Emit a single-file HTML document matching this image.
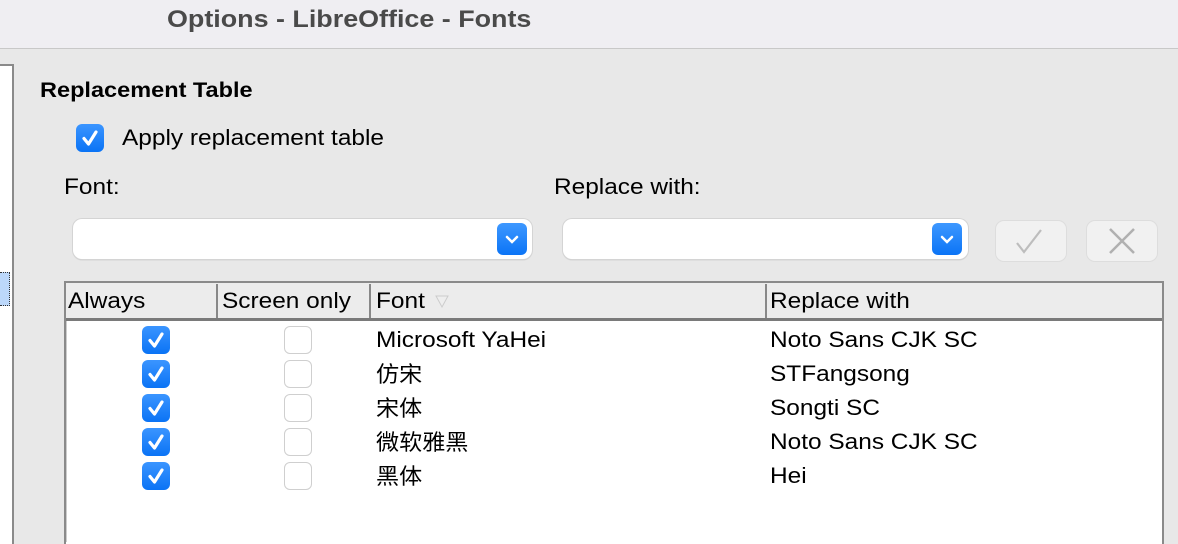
<!DOCTYPE html>
<html><head><style>
body{margin:0;width:1178px;height:542px;overflow:hidden;background:#e8e8e8;font-family:"Liberation Sans","Noto Sans CJK SC",sans-serif;position:relative;color:#000}
.a{position:absolute}
.s{transform:scaleX(1.12);transform-origin:0 0}
.title{left:0;top:0;width:1178px;height:48px;background:#efeef2;border-bottom:1px solid #c8c8c8}
.cb{width:28px;height:28px;border-radius:6px;background:linear-gradient(#3b95ff,#0a73f5);}
.cb svg{position:absolute;left:0;top:0}
.ucb{width:26px;height:26px;border-radius:6px;background:#fff;border:1px solid #cfcfcf}
.dd{background:#fff;border-radius:9px;box-shadow:0 0 0 1px #d4d4d4,0 1px 1px #aaa;height:40px;top:219px}
.btn{width:30px;height:32px;border-radius:6px;background:linear-gradient(#3e98ff,#0b74f6);top:223px}
.tb{width:70px;height:40px;border-radius:8px;background:#f1f1f1;box-shadow:0 0 0 1px #ddd;top:221px}
.t{font-size:22px;white-space:nowrap;transform:scaleX(1.11);transform-origin:0 0}
.c{font-size:22px;white-space:nowrap;transform:scaleX(1.05);transform-origin:0 0;margin-top:-3px}
</style></head><body>
<div class="a title"></div>
<div class="a s" style="left:167px;top:6px;font-size:24px;font-weight:bold;color:#4a4a4a">Options - LibreOffice - Fonts</div>
<div class="a" style="left:0;top:64px;width:12px;height:478px;background:#fff;border-right:2px solid #8a8a8a;border-top:2px solid #8a8a8a"></div>
<div class="a" style="left:0;top:272px;width:9px;height:32px;background:#bcd8fb;border:1px dotted #333;border-left:none"></div>
<div class="a s" style="left:40px;top:79px;font-size:21px;font-weight:bold">Replacement Table</div>
<div class="a cb" style="left:76px;top:124px"><svg width="28" height="28"><path d="M8 14.5 L12.5 20 L20 8" stroke="#fff" stroke-width="3.2" fill="none" stroke-linecap="round" stroke-linejoin="round"/></svg></div>
<div class="a t" style="left:122px;top:125px">Apply replacement table</div>
<div class="a t" style="left:64px;top:174px">Font:</div>
<div class="a t" style="left:554px;top:174px">Replace with:</div>
<div class="a dd" style="left:73px;width:459px"></div>
<div class="a btn" style="left:497px"><svg width="30" height="32"><path d="M10 14 L15 19 L20 14" stroke="#fff" stroke-width="2.5" fill="none" stroke-linecap="round"/></svg></div>
<div class="a dd" style="left:563px;width:405px"></div>
<div class="a btn" style="left:932px;width:30px"><svg width="30" height="32"><path d="M10 14 L15 19 L20 14" stroke="#fff" stroke-width="2.5" fill="none" stroke-linecap="round"/></svg></div>
<div class="a tb" style="left:996px"><svg width="70" height="40"><path d="M21 22 L28 31 L45 9" stroke="#bdbdbd" stroke-width="2.2" fill="none"/></svg></div>
<div class="a tb" style="left:1087px"><svg width="70" height="40"><path d="M23 8 L47 32 M47 8 L23 32" stroke="#b0b0b0" stroke-width="2.5" fill="none"/></svg></div>
<div class="a" style="left:64px;top:281px;width:1096px;height:261px;border:2px solid #8a8a8a;border-bottom:none;background:#fff"></div>
<div class="a" style="left:66px;top:283px;width:1096px;height:35px;background:#ececec;border-bottom:3px solid #7a7a7a"></div>
<div class="a" style="left:216px;top:284px;width:2px;height:34px;background:#888"></div>
<div class="a" style="left:369px;top:284px;width:2px;height:34px;background:#888"></div>
<div class="a" style="left:765px;top:284px;width:2px;height:34px;background:#888"></div>
<div class="a t" style="left:68px;top:288px">Always</div>
<div class="a t" style="left:222px;top:288px">Screen only</div>
<div class="a t" style="left:376px;top:288px">Font</div>
<svg class="a" style="left:434px;top:293px" width="16" height="16"><path d="M2 3 L14 3 L8 14 Z" fill="#eee" stroke="#ccc"/></svg>
<div class="a t" style="left:770px;top:288px">Replace with</div>
<div class="a" style="left:66px;top:321px;width:1094px;height:221px;background:#fff;border-left:1px solid #ccc"></div>

<div class="a cb" style="left:142px;top:326px"><svg width="28" height="28"><path d="M8 14.5 L12.5 20 L20 8" stroke="#fff" stroke-width="3.2" fill="none" stroke-linecap="round" stroke-linejoin="round"/></svg></div>
<div class="a cb" style="left:142px;top:360px"><svg width="28" height="28"><path d="M8 14.5 L12.5 20 L20 8" stroke="#fff" stroke-width="3.2" fill="none" stroke-linecap="round" stroke-linejoin="round"/></svg></div>
<div class="a cb" style="left:142px;top:394px"><svg width="28" height="28"><path d="M8 14.5 L12.5 20 L20 8" stroke="#fff" stroke-width="3.2" fill="none" stroke-linecap="round" stroke-linejoin="round"/></svg></div>
<div class="a cb" style="left:142px;top:428px"><svg width="28" height="28"><path d="M8 14.5 L12.5 20 L20 8" stroke="#fff" stroke-width="3.2" fill="none" stroke-linecap="round" stroke-linejoin="round"/></svg></div>
<div class="a cb" style="left:142px;top:462px"><svg width="28" height="28"><path d="M8 14.5 L12.5 20 L20 8" stroke="#fff" stroke-width="3.2" fill="none" stroke-linecap="round" stroke-linejoin="round"/></svg></div>
<div class="a ucb" style="left:284px;top:326px"></div>
<div class="a ucb" style="left:284px;top:360px"></div>
<div class="a ucb" style="left:284px;top:394px"></div>
<div class="a ucb" style="left:284px;top:428px"></div>
<div class="a ucb" style="left:284px;top:462px"></div>

<div class="a t" style="left:376px;top:327px">Microsoft YaHei</div>
<div class="a c" style="left:376px;top:360px">仿宋</div>
<div class="a c" style="left:376px;top:394px">宋体</div>
<div class="a c" style="left:376px;top:428px">微软雅黑</div>
<div class="a c" style="left:376px;top:462px">黑体</div>
<div class="a t" style="left:770px;top:327px">Noto Sans CJK SC</div>
<div class="a t" style="left:770px;top:361px">STFangsong</div>
<div class="a t" style="left:770px;top:395px">Songti SC</div>
<div class="a t" style="left:770px;top:429px">Noto Sans CJK SC</div>
<div class="a t" style="left:770px;top:463px">Hei</div>
</body></html>
